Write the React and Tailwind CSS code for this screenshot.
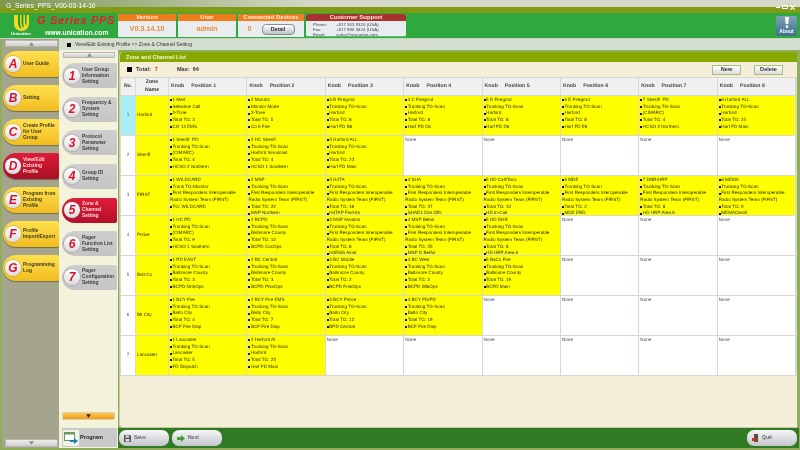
import React from "react";

const TRUNK = "Trunking TG-Scan";
const FIRST = ["First Responders Interoperable", "|Radio System Team (FIRST)"];

const fire = (pos, tail) => [pos, TRUNK, "Harford", "Total TG: 8", tail];
const balt = (pos, total, tail) => [pos, TRUNK, "Baltimore County", "Total TG: " + total, tail];
const city = (pos, total, tail) => [pos, TRUNK, "Balto City", "Total TG: " + total, tail];
const first = (pos, total, tail) => [pos, TRUNK, ...FIRST, "Total TG: " + total, tail];

const ZONES = [
  {
    name: "Harford",
    cells: [
      ["1 Alert", "Selective Call", "2-Tone", "Total TG: 3", "CO 13 EMS"],
      ["2 Monitor", "Monitor Mode", "2-Tone", "Total TG: 5", "Co 6 Fire"],
      fire("3 B Firegrnd", "Harf FD B6"),
      fire("4 C Firegrnd", "Harf FD C6"),
      fire("5 D Firegrnd", "Harf FD D6"),
      fire("6 E Firegrnd", "Harf FD E6"),
      ["7 Sheriff  PD", TRUNK, "(CIMARC)", "Total TG: 4", "HCSO 2 Northern"],
      ["8 Harford ALL", TRUNK, "Harford", "Total TG: 23", "Harf FD Main"],
    ],
  },
  {
    name: "Sheriff",
    cells: [
      ["1 Sheriff  PD", TRUNK, "(CIMARC)", "Total TG: 4", "HCSO 2 Northern"],
      ["2 HC Sheriff", TRUNK, "Harford Simulcast", "Total TG: 4", "HCSO 1 Southern"],
      ["3 Harford ALL", TRUNK, "Harford", "Total TG: 23", "Harf FD Main"],
    ],
  },
  {
    name: "FIRST",
    cells: [
      ["1 WILDCARD", "Trunk TG-Monitor", ...FIRST, "TG: WILDCARD"],
      first("2 MSP", 22, "MSP Northern"),
      first("3 HdTA", 36, "HdTAP Fin/Hrb"),
      first("4 SHA", 37, "SHAD1 Dist Offc"),
      first("5 HD Call/Tacs", 34, "HD In-Call"),
      first("6 MDE", 2, "MDE ERD"),
      first("7 DNR/HRP", 8, "HD HRP Area 6"),
      first("8 MEMA", 9, "MEMACentrl"),
    ],
  },
  {
    name: "Police",
    cells: [
      ["1 HC PD", TRUNK, "(CIMARC)", "Total TG: 9", "HCSO 1 Southern"],
      ["2 BCPD", TRUNK, "Baltimore County", "Total TG: 12", "BCPD CocOps"],
      first("3 MSP Aviation", 8, "HdEMS Aviat"),
      first("4 MSP Belair", 25, "MSP D BelAir"),
      first("5 HD DHR", 8, "HD HRP Area 6"),
    ],
  },
  {
    name: "Balt Co",
    cells: [
      balt("1 PD EAST", 3, "BCPD NrthOps"),
      balt("2 BC Central", 3, "BCPD PrkvOps"),
      balt("3 BC Middle", 2, "BCPD FrnkOps"),
      balt("4 BC West", 2, "BCPD WlkOps"),
      balt("5 BaCo Fire", 19, "BCFD Main"),
    ],
  },
  {
    name: "Blt City",
    cells: [
      city("1 BCY Fire", 4, "BCF Fire Disp"),
      city("2 BCY Fire EMS", 7, "BCF Fire Disp"),
      city("3 BCY Police", 12, "BPD Central"),
      city("4 BCY FD/PD", 19, "BCF Fire Disp"),
    ],
  },
  {
    name: "Lancaster",
    cells: [
      ["1 Lancaster", TRUNK, "Lancaster", "Total TG: 5", "FD Dispatch"],
      ["2 Harford Al", TRUNK, "Harford", "Total TG: 23", "Harf FD Main"],
    ],
  },
];

const POSITIONS = [1, 2, 3, 4, 5, 6, 7, 8];

const MAIN_NAV = [
  { key: "A", label: ["User Guide"] },
  { key: "B", label: ["Setting"] },
  { key: "C", label: ["Create Profile", "for User", "Group"] },
  { key: "D", label: ["View/Edit", "Existing", "Profile"], active: true },
  { key: "E", label: ["Program from", "Existing", "Profile"] },
  { key: "F", label: ["Profile", "Import/Export"] },
  { key: "G", label: ["Programming", "Log"] },
];

const SUB_NAV = [
  { key: "1", label: ["User Group", "Information", "Setting"] },
  { key: "2", label: ["Frequency &", "System", "Setting"] },
  { key: "3", label: ["Protocol", "Parameter", "Setting"] },
  { key: "4", label: ["Group ID", "Setting"] },
  { key: "5", label: ["Zone &", "Channel", "Setting"], active: true },
  { key: "6", label: ["Pager", "Function List", "Setting"] },
  { key: "7", label: ["Pager", "Configuration", "Setting"] },
];

function NavCircle({ children }) {
  return (
    <span className="flex h-[16px] w-[16px] shrink-0 items-center justify-center rounded-full bg-gradient-to-b from-white to-[#dcdcdc] text-[12px] font-bold italic leading-none text-[#d8122c] shadow-[0_0_0_1px_rgba(110,110,110,0.3)]">
      {children}
    </span>
  );
}

function MainNavButton({ item }) {
  const color = item.active
    ? "from-[#e01c3a] to-[#a90f25] text-[#ffd9d9]"
    : "from-[#ffe14d] to-[#f2bd1c] text-[#3a3a20]";
  return (
    <div className={`flex h-[26px] w-[56px] items-center gap-[2px] rounded-l-[13px] rounded-r-[2px] bg-gradient-to-b pl-[2px] shadow-[0_1px_1px_rgba(70,70,40,0.6)] ${color}`}>
      <NavCircle>{item.key}</NavCircle>
      <span className="whitespace-nowrap text-[4.9px] font-bold leading-[6px]">
        {item.label.map((l) => <div key={l}>{l}</div>)}
      </span>
    </div>
  );
}

function SubNavButton({ item }) {
  const color = item.active
    ? "from-[#e01c3a] to-[#b3102a] text-[#ffd9d9]"
    : "from-[#cfcfcf] to-[#c4c4c4] text-[#3a3a3a]";
  return (
    <div className={`flex h-[25px] w-[55px] items-center gap-[2px] rounded-l-[13px] rounded-r-[2px] bg-gradient-to-b pl-[2px] ${color}`}>
      <NavCircle>{item.key}</NavCircle>
      <span className="whitespace-nowrap text-[4.9px] font-bold leading-[6px]">
        {item.label.map((l) => <div key={l}>{l}</div>)}
      </span>
    </div>
  );
}

function ArrowBar({ up, orange, className }) {
  return (
    <div className={`flex items-center justify-center rounded-[1px] border ${orange ? "border-[#d9d2b0] bg-gradient-to-b from-[#ffc94a] to-[#f09a1c]" : "border-[#b8b8a8] bg-gradient-to-b from-[#eeeeee] to-[#cfcfcf]"} ${className}`}>
      <svg width="5" height="4" viewBox="0 0 6 4">
        <path d={up ? "M3 0 6 4H0Z" : "M0 0H6L3 4Z"} fill={orange ? "#3a2c00" : "#8a8a8a"} />
      </svg>
    </div>
  );
}

function Logo() {
  return (
    <div className="flex w-[22px] flex-col items-center">
      <svg width="15" height="16" viewBox="0 0 15 16">
        <path d="M0 0H15V9A7.5 7 0 0 1 0 9Z" fill="#f4d81c" />
        <path d="M4 0V8Q4 12 7.5 14Q5.5 9 6 0ZM7.5 0V8Q7.5 11 10 13Q9 9 9.5 0ZM11 0V7Q11 9 12.5 10.5Q12.5 6 12.7 0Z" fill="#1f9a3a" />
      </svg>
      <span className="mt-[1px] text-[4.4px] font-bold leading-[4px] text-white">Unication</span>
    </div>
  );
}

function InfoCard({ title, className, children }) {
  return (
    <div className={`flex flex-col overflow-hidden rounded-t-[2px] bg-[#e9edf0] ${className}`}>
      <div className="h-[7px] whitespace-nowrap bg-[#ee7d1d] text-center text-[6px] font-bold leading-[7px] text-[#fff2e0]">{title}</div>
      <div className="flex flex-1 items-center justify-center gap-[10px] text-[7.2px] font-bold text-[#ee8a3c]">{children}</div>
    </div>
  );
}

function Header() {
  return (
    <div className="flex h-[25px] items-center bg-[#2fa83f] pl-[10px] pr-[3px]">
      <Logo />
      <div className="ml-[5px] flex w-[81px] flex-col whitespace-nowrap">
        <span className="text-[11px] font-bold italic leading-[11px] tracking-[0.7px] text-[#e4202a]">G Series PPS</span>
        <span className="ml-[8px] mt-[3px] text-[6.8px] font-bold leading-[7px] text-white">www.unication.com</span>
      </div>
      <div className="flex h-[23px] gap-[2px]">
        <InfoCard title="Version" className="w-[58px]">V0.3.14.10</InfoCard>
        <InfoCard title="User" className="w-[58px]">admin</InfoCard>
        <InfoCard title="Connected Devices" className="w-[66px]">
          <span>0</span>
          <span className="flex h-[11px] w-[33px] items-center justify-center rounded-[4px] border border-[#8a8f96] bg-gradient-to-b from-white to-[#bcc2c9] text-[5.4px] text-[#333]">Detail</span>
        </InfoCard>
        <div className="flex w-[100px] flex-col overflow-hidden rounded-[2px] border-b border-[#5fc46c] bg-[#e9edf0]">
          <div className="h-[7px] bg-[#a8322e] text-center text-[6px] font-bold leading-[7px] text-[#ffe9e0]">Customer Support</div>
          <div className="grid grid-cols-[23px_1fr] pl-[7px] pt-[1px] text-[4.4px] leading-[5px] text-[#444]">
            <span>Phone:</span><span>+817 303 9320 (USA)</span>
            <span>Fax:</span><span>+817 886 3424 (USA)</span>
            <span>Email:</span><span>sales@unication.com</span>
          </div>
        </div>
      </div>
      <div className="ml-auto flex h-[20px] w-[21px] flex-col items-center justify-center gap-[1px] rounded-[2px] bg-gradient-to-b from-[#7fa3b8] to-[#3e6f8c] text-white">
        <svg width="4" height="11" viewBox="0 0 4 11">
          <path d="M0 0H4L3.2 7H0.8Z" fill="#fff" />
          <rect x="0.8" y="8.4" width="2.4" height="2.4" fill="#fff" />
        </svg>
        <span className="text-[5px] font-bold leading-[5px]">About</span>
      </div>
    </div>
  );
}

function TitleBar() {
  return (
    <div className="flex h-[13px] items-center justify-between bg-[linear-gradient(to_bottom,transparent_55%,#7f9b14_55%),linear-gradient(to_right,#7d9650,#d5d9c9_40%)] pl-[6px] pr-[5px]">
      <span className="text-[6.7px] leading-none text-white">G_Series_PPS_V00-03-14-10</span>
      <span className="flex items-center gap-[2px] pt-[1px]">
        <span className="h-[1px] w-[4px] bg-white" />
        <span className="h-[4px] w-[6px] border border-white" />
        <svg width="5" height="5" viewBox="0 0 5 5"><path d="M0 0 5 5M5 0 0 5" stroke="#fff" strokeWidth="1.2" /></svg>
      </span>
    </div>
  );
}

function Sidebar() {
  return (
    <div className="flex w-[57px] flex-col bg-[#a5a58e] pb-[1px] pl-[1px] pt-[1px]">
      <ArrowBar up className="ml-[2px] h-[7px] w-[53px]" />
      <div className="mt-[4px] flex flex-col gap-[8px]">
        {MAIN_NAV.map((item) => <MainNavButton key={item.key} item={item} />)}
      </div>
      <ArrowBar className="ml-[2px] mt-auto h-[8px] w-[53px]" />
    </div>
  );
}

function SubNav() {
  return (
    <div className="flex w-[59px] flex-col bg-[#f3f3dc] pl-[3px] pr-[1px] pt-[2px]">
      <ArrowBar up className="mx-[1px] h-[6px] w-[52px]" />
      <div className="mt-[5px] flex flex-col gap-[8.67px]">
        {SUB_NAV.map((item) => <SubNavButton key={item.key} item={item} />)}
      </div>
      <ArrowBar orange className="mt-auto h-[8px] w-[53px]" />
      <div className="mb-[1px] mt-[8px] flex h-[19px] w-[55px] items-center gap-[1px] bg-[#c9c9c9] pl-[1px]">
        <span className="flex h-[16px] w-[16px] items-center justify-center rounded-[1px] bg-[#f2f2ec]">
          <svg width="14" height="12" viewBox="0 0 14 12">
            <rect x="0.5" y="0.5" width="10" height="8" fill="#fff" stroke="#6a9a5a" />
            <rect x="0.5" y="0.5" width="10" height="2" fill="#6a9a5a" />
            <path d="M6 8H10V6L14 9 10 12V10H6Z" fill="#1c7fa8" />
          </svg>
        </span>
        <span className="text-[5.6px] font-bold text-[#222]">Program</span>
      </div>
    </div>
  );
}

function Cell({ lines }) {
  if (!lines) {
    return <div className="overflow-hidden bg-white pl-[1px] pt-[1px] leading-[6.67px] text-[#444]">None</div>;
  }
  return (
    <div className="overflow-hidden bg-[#ffff00] pl-[1px] pt-[1px] leading-[6.67px] text-[#2a2a00]">
      {lines.map((l, i) =>
        l.startsWith("|") ? (
          <div key={i} className="whitespace-nowrap">{l.slice(1)}</div>
        ) : (
          <div key={i} className="flex items-center gap-[0.5px] whitespace-pre">
            <span className="h-[2px] w-[2px] shrink-0 bg-[#111]" />
            {l}
          </div>
        )
      )}
    </div>
  );
}

function ZoneTable() {
  return (
    <div className="grid grid-cols-[14px_32px_repeat(8,77.4px)] grid-rows-[17px_repeat(7,39px)] gap-[1px] bg-[#d8d8cc] p-[1px] text-[4.6px] [text-rendering:geometricPrecision]">
      <div className="flex items-center justify-center bg-[#f0f0f0] text-[5px] font-bold text-[#333]">No.</div>
      <div className="flex items-center justify-center bg-[#f0f0f0] text-center text-[5.2px] font-bold leading-[7.5px] text-[#333]">Zone<br />Name</div>
      {POSITIONS.map((p) => (
        <div key={p} className="flex items-center gap-[7px] whitespace-nowrap bg-[#f0f0f0] pl-[2px] text-[5.2px] font-bold text-[#444]">
          <span>Knob</span>
          <span>Position {p}</span>
        </div>
      ))}
      {ZONES.map((zone, i) => (
        <React.Fragment key={zone.name}>
          <div className={`flex items-center justify-center text-[#555] ${i === 0 ? "bg-[#a8eef6]" : "bg-white"}`}>{i + 1}</div>
          <div className="flex items-center bg-[#ffff00] pl-[1px] text-[#2a2a00]">{zone.name}</div>
          {POSITIONS.map((p, c) => <Cell key={p} lines={zone.cells[c]} />)}
        </React.Fragment>
      ))}
    </div>
  );
}

function Panel() {
  return (
    <div className="ml-[1px] mr-[2px] mt-[2px] flex flex-1 flex-col overflow-hidden rounded-l-[4px] border-b border-l border-[#c8c8a8] bg-[#f5efd9]">
      <div className="flex h-[10px] items-center bg-[#88a800] pl-[6px] text-[5.6px] font-bold text-[#f2f6d8]">Zone and Channel List</div>
      <div className="flex h-[15px] items-center pl-[7px] pr-[14px] text-[5.6px] font-bold text-[#333]">
        <span className="h-[5px] w-[5px] bg-black" />
        <span className="ml-[4px]">Total:</span>
        <span className="ml-[4px] text-[#ee2a2a]">7</span>
        <span className="ml-[19px]">Max:</span>
        <span className="ml-[3px]">64</span>
        <span className="ml-auto flex h-[10px] w-[29px] items-center justify-center border border-[#a9bd7c] bg-gradient-to-b from-white to-[#dcdcdc]">New</span>
        <span className="ml-[13px] flex h-[10px] w-[29px] items-center justify-center border border-[#a9bd7c] bg-gradient-to-b from-white to-[#dcdcdc]">Delete</span>
      </div>
      <ZoneTable />
    </div>
  );
}

function PillButton({ icon, children, className }) {
  return (
    <div className={`flex h-[16px] w-[50px] items-center gap-[3px] rounded-[7px] bg-gradient-to-b from-[#f6f7f8] to-[#c3c6cc] pl-[5px] text-[5px] font-bold text-[#666] ${className}`}>
      {icon}
      {children}
    </div>
  );
}

function BottomBar() {
  return (
    <div className="flex h-[20px] items-center bg-[#2f7a22] pl-[1px] pr-[2px]">
      <PillButton
        icon={
          <svg width="7" height="7" viewBox="0 0 7 7">
            <path d="M0 0H6L7 1V7H0Z" fill="#555" />
            <rect x="1.5" y="0.5" width="3.5" height="2.2" fill="#ddd" />
            <rect x="1.5" y="4" width="4" height="2.5" fill="#ddd" />
          </svg>
        }
      >
        Save
      </PillButton>
      <PillButton
        className="ml-[3px]"
        icon={
          <svg width="8" height="7" viewBox="0 0 8 7">
            <path d="M0 2H4V0L8 3.5 4 7V5H0Z" fill="#3fa336" />
          </svg>
        }
      >
        Next
      </PillButton>
      <PillButton
        className="ml-auto"
        icon={
          <svg width="7" height="8" viewBox="0 0 7 8">
            <rect x="2" y="0" width="4" height="8" fill="#5a4a48" />
            <rect x="0" y="4" width="4" height="3" fill="#c8391f" />
          </svg>
        }
      >
        Quit
      </PillButton>
    </div>
  );
}

export default function App() {
  return (
    <div className="flex h-[450px] w-[800px] flex-col overflow-hidden bg-[#8fad5a] font-['Liberation_Sans',sans-serif] blur-[0.3px]">
      <TitleBar />
      <Header />
      <div className="h-[1px] bg-[#c6d8b8]" />
      <div className="flex flex-1 pb-[2px] pl-[2px]">
        <Sidebar />
        <div className="flex flex-1 flex-col">
          <div className="flex h-[11px] items-center bg-[#d5dfcf] pl-[8px] text-[5px] text-[#333]">
            <span className="h-[4px] w-[4px] bg-black" />
            <span className="ml-[4px]">View/Edit Existing Profile &gt;&gt; Zone &amp; Channel Setting</span>
          </div>
          <div className="flex flex-1">
            <SubNav />
            <div className="flex flex-1 flex-col pr-[1px]">
              <Panel />
              <BottomBar />
            </div>
          </div>
        </div>
      </div>
    </div>
  );
}
